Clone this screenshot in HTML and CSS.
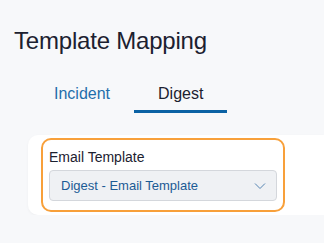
FILE: index.html
```html
<!DOCTYPE html>
<html lang="en">
<head>
    <meta charset="UTF-8">
    <meta name="viewport" content="width=device-width, initial-scale=1.0">
    <title>Template Mapping</title>
    <link rel="stylesheet" href="styles.css">
</head>
<body>

    <div class="page">
        <h1 class="page-title">Template Mapping</h1>

        <div class="tabs">
            <div class="tab">Incident</div>
            <div class="tab active">Digest</div>
        </div>

        <div class="card">
            <div class="field-box">
                <div class="field-label">Email Template</div>
                <div class="select-box">
                    <span class="select-value">Digest - Email Template</span>
                    <svg class="chevron" width="12" height="8" viewBox="0 0 12 8">
                        <path d="M1 1.5 L6 6.5 L11 1.5" fill="none" stroke="#5584b2" stroke-width="1"/>
                    </svg>
                </div>
            </div>
        </div>
    </div>

</body>
</html>
```

FILE: styles.css
```css
:root {
    --page-background: #f7f8fa;
    --text-dark: #1c2130;
    --link-blue: #1f6eab;
    --tab-underline: #0b62a4;
    --value-blue: #1c5b95;
    --focus-orange: #f8a03a;
    --select-bg: #eff1f4;
    --select-border: #d4d7dc;
}

* {
    margin: 0;
    padding: 0;
    box-sizing: border-box;
}

body {
    font-family: 'Liberation Sans', Arial, sans-serif;
    background-color: var(--page-background);
    color: var(--text-dark);
}

.page {
    padding-top: 27px;
}

/* Title */
.page-title {
    font-size: 24px;
    font-weight: normal;
    line-height: 28px;
    margin-left: 14px;
    letter-spacing: -0.2px;
}

/* Tabs */
.tabs {
    display: flex;
    margin: 29px 0 0 30px;
}

.tab {
    font-size: 16px;
    line-height: 20px;
    padding: 0 24px 6px;
    color: var(--link-blue);
    border-bottom: 3px solid transparent;
}

.tab.active {
    color: var(--text-dark);
    border-bottom-color: var(--tab-underline);
}

/* Card runs to the right edge of the window */
.card {
    margin: 22px 0 0 28px;
    padding: 3px 0 3px 13px;
    background-color: #ffffff;
    border-radius: 10px 0 0 10px;
    box-shadow: 0 1px 3px rgba(0, 0, 0, 0.04);
}

.field-box {
    width: 244px;
    padding: 9px 6px;
    border: 2.5px solid var(--focus-orange);
    border-radius: 10px;
}

.field-label {
    font-size: 14px;
    line-height: 17px;
    margin-bottom: 4px;
}

.select-box {
    display: flex;
    justify-content: space-between;
    align-items: center;
    height: 31px;
    padding: 0 11px;
    background-color: var(--select-bg);
    border: 1px solid var(--select-border);
    border-radius: 4px;
}

.select-value {
    font-size: 13px;
    color: var(--value-blue);
}

.chevron {
    margin-right: -1px;
}
```
